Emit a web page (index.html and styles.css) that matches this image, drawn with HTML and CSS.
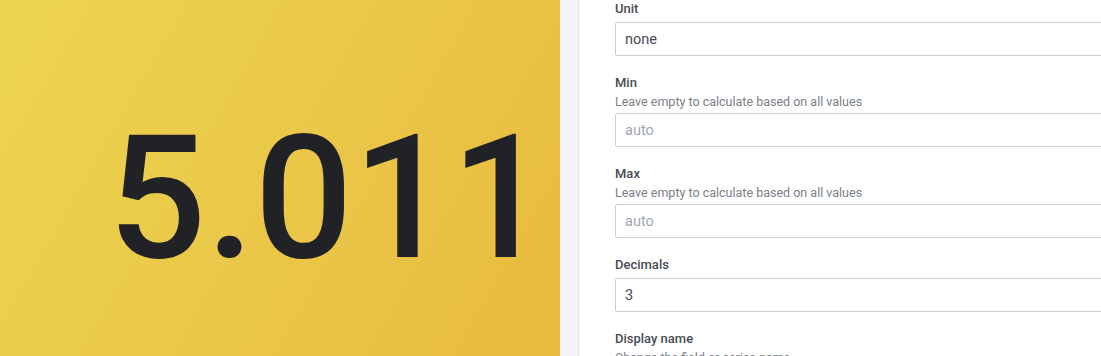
FILE: index.html
```html
<!DOCTYPE html>
<html lang="en">

<head>
  <meta charset="UTF-8">
  <meta name="viewport" content="width=device-width, initial-scale=1.0">
  <title>Panel editor - Stat</title>
  <link rel="stylesheet" href="styles.css">
</head>

<body>

  <div class="editor">
    <!-- Stat panel preview -->
    <div class="viz">
      <span class="stat-value">5.011</span>
    </div>

    <div class="splitter"></div>

    <!-- Standard field options -->
    <div class="options">
      <div class="field">
        <label class="field-label" for="unit">Unit</label>
        <input type="text" id="unit" class="field-input" value="none">
      </div>

      <div class="field">
        <label class="field-label" for="min">Min</label>
        <div class="field-desc">Leave empty to calculate based on all values</div>
        <input type="text" id="min" class="field-input" placeholder="auto">
      </div>

      <div class="field">
        <label class="field-label" for="max">Max</label>
        <div class="field-desc">Leave empty to calculate based on all values</div>
        <input type="text" id="max" class="field-input" placeholder="auto">
      </div>

      <div class="field">
        <label class="field-label" for="decimals">Decimals</label>
        <input type="text" id="decimals" class="field-input" value="3">
      </div>

      <div class="field">
        <label class="field-label" for="display-name">Display name</label>
        <div class="field-desc">Change the field or series name</div>
        <input type="text" id="display-name" class="field-input">
      </div>
    </div>
  </div>

</body>

</html>
```

FILE: styles.css
```css
body {
  font-family: Roboto, "Liberation Sans", Arial, sans-serif;
  background-color: #fff;
  margin: 0;
  overflow: hidden;
}

.editor {
  display: flex;
  width: 1101px;
  height: 356px;
  overflow: hidden;
}

.viz {
  flex: 0 0 560px;
  display: flex;
  align-items: center;
  padding: 40px 0 0 108px;
  box-sizing: border-box;
  background: linear-gradient(120deg, #edd550 0%, #eac648 55%, #e9bb3c 100%);
}

.stat-value {
  font-size: 173px;
  font-weight: 500;
  line-height: 1;
  color: #202226;
  white-space: nowrap;
}

.splitter {
  flex: 0 0 18px;
  background-color: #f4f5f8;
  border-right: 1px solid #e1e4e9;
}

.options {
  flex: 1;
  padding-left: 36px;
  overflow: hidden;
}

.field {
  margin-bottom: 18px;
}

.field-label {
  display: block;
  font-size: 13px;
  font-weight: 500;
  line-height: 18px;
  color: #464c54;
}

.field-desc {
  font-size: 12.5px;
  line-height: 17px;
  padding-top: 1px;
  margin-bottom: -1px;
  color: #7b8087;
}

.field-input {
  display: block;
  margin-top: 4px;
  width: 700px;
  height: 34px;
  box-sizing: border-box;
  padding: 0 9px;
  border: 1px solid #c7d0d9;
  border-radius: 2px;
  background-color: #fff;
  font-family: inherit;
  font-size: 14.5px;
  color: #464c54;
  outline: none;
}

.field-input::placeholder {
  color: #9fa7b3;
}
```
